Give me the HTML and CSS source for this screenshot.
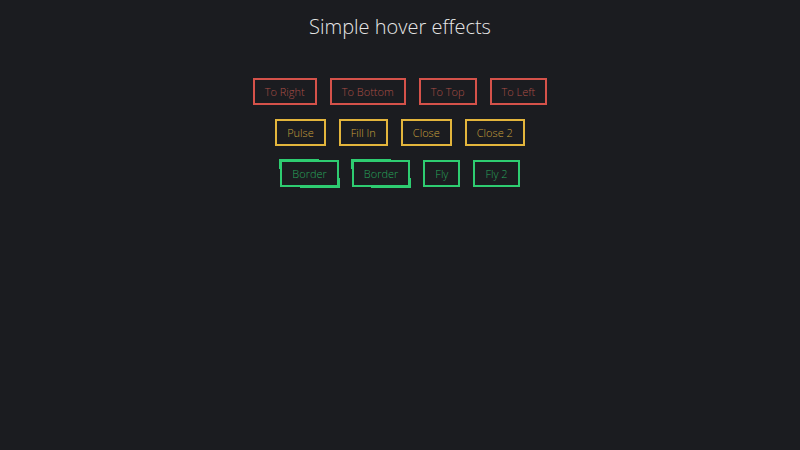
FILE: index.html
```html
<!DOCTYPE html>
<html lang="en">
<head>
  <meta charset="UTF-8">
  <title>Simple hover effects</title>
  <link rel="stylesheet" href="styles.css">
</head>
<body>

  <h1>Simple hover effects</h1>

  <div class="row red">
    <button class="btn">To Right</button>
    <button class="btn">To Bottom</button>
    <button class="btn">To Top</button>
    <button class="btn">To Left</button>
  </div>

  <div class="row yellow">
    <button class="btn">Pulse</button>
    <button class="btn">Fill In</button>
    <button class="btn">Close</button>
    <button class="btn">Close 2</button>
  </div>

  <div class="row green">
    <button class="btn corners">Border</button>
    <button class="btn corners">Border</button>
    <button class="btn">Fly</button>
    <button class="btn">Fly 2</button>
  </div>

</body>
</html>
```

FILE: styles.css
```css
body {
  font-family: 'Open Sans', sans-serif;
  font-weight: 300;
  background: #1b1c20;
  color: #e6e6e6;
  margin: 0;
  padding: 13px 0;
  display: flex;
  flex-direction: column;
  align-items: center;
}

h1 {
  font-size: 20px;
  line-height: 28px;
  font-weight: 300;
  margin: 0 0 37px;
}

.row {
  display: flex;
  justify-content: center;
  gap: 13px;
  margin-bottom: 14px;
}

.btn {
  position: relative;
  font-family: inherit;
  font-weight: 300;
  font-size: 11px;
  line-height: 15px;
  padding: 4px 10px;
  background: none;
  border: 2px solid;
  cursor: pointer;
}

.red .btn {
  border-color: #d5524a;
  color: #a94e46;
}

.yellow .btn {
  border-color: #e3b53c;
  color: #c9a03c;
}

.green .btn {
  border-color: #2ecc71;
  color: #28a45c;
}

/* corner accents of the border effect */
.corners::before,
.corners::after {
  content: "";
  position: absolute;
  width: 68%;
  height: 30%;
}

.corners::before {
  top: -3px;
  left: -3px;
  border-top: 3px solid #2ecc71;
  border-left: 3px solid #2ecc71;
}

.corners::after {
  bottom: -3px;
  right: -3px;
  border-bottom: 3px solid #2ecc71;
  border-right: 3px solid #2ecc71;
}
```
